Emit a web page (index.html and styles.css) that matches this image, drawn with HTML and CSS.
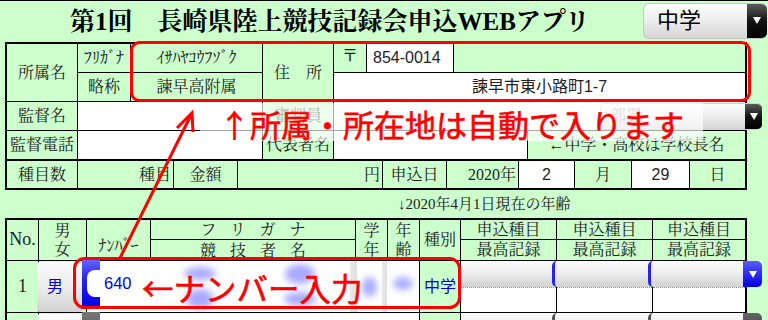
FILE: index.html
```html
<!DOCTYPE html>
<html lang="ja">
<head>
<meta charset="utf-8">
<title>第1回 長崎県陸上競技記録会申込WEBアプリ</title>
<link rel="stylesheet" href="styles.css">
</head>
<body>
<header class="head">
  <h1 class="title">第1回　長崎県陸上競技記録会申込WEBアプリ</h1>
  <div class="sel sel-top"><span class="sel-val">中学</span><span class="sel-btn"><i class="tri"></i></span></div>
</header>

<div class="ga">
  <div class="c a1">所属名</div>
  <div class="c a2">ﾌﾘｶﾞﾅ</div>
  <div class="c a3">ｲｻﾊﾔｺｳﾌｿﾞｸ</div>
  <div class="c a4">住　所</div>
  <div class="c a5 sans zipmark">〒</div>
  <div class="c w a6 sans left">854-0014</div>
  <div class="c a7"></div>
  <div class="c a8">略称</div>
  <div class="c a9">諫早高附属</div>
  <div class="c w a10 sans">諫早市東小路町1-7</div>
  <div class="c a11">監督名</div>
  <div class="c w a12"></div>
  <div class="c a13">審判員</div>
  <div class="c w a14"><div class="sel sel-dept"><span class="sel-val">部署</span><span class="sel-btn"><i class="tri"></i></span></div></div>
  <div class="c a15">監督電話</div>
  <div class="c w a16"></div>
  <div class="c a17">代表者名</div>
  <div class="c w a18"></div>
  <div class="c a19">←中学・高校は学校長名</div>
</div>

<div class="gb">
  <div class="c">種目数</div>
  <div class="c right">種目</div>
  <div class="c">金額</div>
  <div class="c right">円</div>
  <div class="c">申込日</div>
  <div class="c right">2020年</div>
  <div class="c w sans">2</div>
  <div class="c">月</div>
  <div class="c w sans">29</div>
  <div class="c">日</div>
</div>

<p class="caption">↓2020年4月1日現在の年齢</p>

<div class="gc">
  <div class="c k1 no">No.</div>
  <div class="c k2 stack"><span>男</span><span>女</span></div>
  <div class="c k3 nbh">ﾅﾝﾊﾞｰ</div>
  <div class="c k4 spaced">フリガナ</div>
  <div class="c k5 stack"><span>学</span><span>年</span></div>
  <div class="c k6 stack"><span>年</span><span>齢</span></div>
  <div class="c k7">種別</div>
  <div class="c k8">申込種目</div>
  <div class="c k9">申込種目</div>
  <div class="c k10">申込種目</div>
  <div class="c k11 spaced">競技者名</div>
  <div class="c k12">最高記録</div>
  <div class="c k13">最高記録</div>
  <div class="c k14">最高記録</div>

  <div class="c r3 no">1</div>
  <div class="c r3 sexcell"><div class="gsel sex sans">男</div></div>
  <div class="c w r3 sp4 entry">
    <div class="numbox"><span class="nb-bar"></span><span class="nb-field sans">640</span></div>
    <div class="namebox"><i class="blob b1"></i><i class="blob b3"></i><i class="blob b2"></i><i class="blob b4"></i></div>
    <span class="vbar"></span>
    <div class="gradebox"><i class="blob b5"></i></div>
    <span class="vbar thin"></span>
    <div class="agebox"><i class="blob b6"></i></div>
  </div>
  <div class="c r3 blue sans">中学</div>
  <div class="c w r3 ev"><div class="gsel evsel"></div><div class="evbot"></div></div>
  <div class="c w r3 ev"><div class="gsel evsel focus"></div><div class="evbot"></div></div>
  <div class="c w r3 ev"><div class="gsel evsel focus last"><span class="drop dblue"><i class="tri"></i></span></div><div class="evbot"></div></div>

  <div class="c r4"></div>
  <div class="c r4 sexcell"><div class="gsel sex"></div></div>
  <div class="c w r4 sp4 entry"><div class="numbox"><span class="nb-bar gray"></span></div></div>
  <div class="c r4"></div>
  <div class="c w r4 ev"><div class="gsel evsel"></div></div>
  <div class="c w r4 ev"><div class="gsel evsel focus gr"></div></div>
  <div class="c w r4 ev"><div class="gsel evsel focus gr last"><span class="drop ddark"><i class="tri"></i></span></div></div>
</div>

<div class="note1">↑所属・所在地は自動で入ります</div>
<div class="note2">←ナンバー入力</div>

<svg class="marks" width="768" height="320" viewBox="0 0 768 320">
  <rect x="131.5" y="42.5" width="618" height="58" rx="8" fill="none" stroke="#ff0000" stroke-width="3"/>
  <rect x="74.5" y="258.5" width="385" height="49" rx="10" fill="none" stroke="#ff0000" stroke-width="3"/>
  <line x1="120" y1="258" x2="191" y2="115" stroke="#ff0000" stroke-width="3"/>
  <polyline points="177,128 192,113 193,132" fill="none" stroke="#ff0000" stroke-width="3"/>
</svg>
</body>
</html>
```

FILE: styles.css
```css
* { box-sizing: border-box; margin: 0; padding: 0; }
html, body { width: 768px; height: 320px; overflow: hidden; }
body {
  position: relative;
  background: #ccffcc;
  color: #222;
  font-family: "Liberation Serif", "Noto Serif CJK JP", "Noto Sans CJK JP", serif;
  font-size: 16px;
  line-height: 1.2;
}
.sans { font-family: "Liberation Sans", "Noto Sans CJK JP", sans-serif; }

/* header */
.head { display: flex; align-items: flex-start; height: 42px; border-top: 1px solid #000; }
.title { padding-left: 70px; font-size: 25px; line-height: 41px; font-weight: bold; color: #000; white-space: nowrap; }
.sel { display: flex; overflow: hidden; background: linear-gradient(#fdfdfd, #ececec 50%, #d6d6d6); }
.sel-val { flex: 1; display: flex; align-items: center; white-space: nowrap; }
.sel-btn { width: 20px; display: flex; justify-content: center; align-items: center; background: linear-gradient(#5c5c5c, #141414 50%, #000); }
.tri { display: block; width: 0; height: 0; border-left: 4px solid transparent; border-right: 4px solid transparent; border-top: 7px solid #fff; }
.sel-top { margin-left: auto; margin-top: 2px; margin-right: 1px; width: 124px; height: 36px; border: 1px solid #c6c6c6; border-right: 0; border-radius: 6px; }
.sel-top .sel-val { padding-left: 13px; font-size: 22px; color: #000; font-family: "Liberation Sans", "Noto Sans CJK JP", sans-serif; }
.sel-top .sel-btn { align-items: flex-start; padding-top: 13px; }

/* generic cells */
.c { background: #ccffcc; display: flex; align-items: center; justify-content: center; white-space: nowrap; min-width: 0; }
.w { background: #fff; }
.left { justify-content: flex-start; padding-left: 6px; }
.right { justify-content: flex-end; padding-right: 2px; }

/* grid A */
.ga {
  display: grid;
  grid-template-columns: 70px 52px 131px 70px 32px 86px 73px 72px 144px;
  grid-template-rows: 28px 28px 28px 28px;
  gap: 1px; background: #000; border: 2px solid #000;
  width: 742px; margin-left: 5px;
}
.a1 { grid-area: 1 / 1 / 3 / 2; }
.a2 { grid-area: 1 / 2 / 2 / 3; }
.a3 { grid-area: 1 / 3 / 2 / 4; }
.a4 { grid-area: 1 / 4 / 3 / 5; }
.a5 { grid-area: 1 / 5 / 2 / 6; }
.a6 { grid-area: 1 / 6 / 2 / 7; }
.a7 { grid-area: 1 / 7 / 2 / 10; }
.a8 { grid-area: 2 / 2 / 3 / 3; }
.a9 { grid-area: 2 / 3 / 3 / 4; }
.a10 { grid-area: 2 / 5 / 3 / 10; }
.a11 { grid-area: 3 / 1 / 4 / 2; }
.a12 { grid-area: 3 / 2 / 4 / 4; }
.a13 { grid-area: 3 / 4 / 4 / 5; }
.a14 { grid-area: 3 / 5 / 4 / 10; justify-content: flex-end; }
.a15 { grid-area: 4 / 1 / 5 / 2; }
.a16 { grid-area: 4 / 2 / 5 / 4; }
.a17 { grid-area: 4 / 4 / 5 / 5; }
.a18 { grid-area: 4 / 5 / 5 / 8; }
.a19 { grid-area: 4 / 8 / 5 / 10; }
.zipmark { align-items: flex-start; padding-top: 2px; }
.sel-dept { width: 162px; height: 27px; margin-right: -17px; border: 1px solid #cfcfcf; border-right: 0; border-radius: 5px; }
.sel-dept .sel-val { padding-left: 9px; color: #9a9a9a; }
.sel-dept .sel-btn { width: 17px; }

/* grid B */
.gb {
  display: grid;
  grid-template-columns: 70px 95px 63px 144px 63px 71px 55px 56px 57px 55px;
  grid-template-rows: 27px;
  gap: 1px; background: #000; border: 2px solid #000; border-top: 0;
  width: 742px; margin-left: 5px;
}

.caption { height: 28px; line-height: 28px; padding-left: 398px; font-size: 15px; }

/* grid C */
.gc {
  display: grid;
  grid-template-columns: 31px 47px 63px 204px 31px 31px 40px 95px 95px 92px;
  grid-template-rows: 19px 20px 51px 30px;
  gap: 1px; background: #000; border: 2px solid #000; border-bottom: 0;
  width: 742px; margin-left: 5px;
}
.k1 { grid-area: 1 / 1 / 3 / 2; }
.k2 { grid-area: 1 / 2 / 3 / 3; }
.k3 { grid-area: 1 / 3 / 3 / 4; }
.k4 { grid-area: 1 / 4 / 2 / 5; }
.k5 { grid-area: 1 / 5 / 3 / 6; }
.k6 { grid-area: 1 / 6 / 3 / 7; }
.k7 { grid-area: 1 / 7 / 3 / 8; }
.k8 { grid-area: 1 / 8 / 2 / 9; }
.k9 { grid-area: 1 / 9 / 2 / 10; }
.k10 { grid-area: 1 / 10 / 2 / 11; }
.k11 { grid-area: 2 / 4 / 3 / 5; }
.k12 { grid-area: 2 / 8 / 3 / 9; }
.k13 { grid-area: 2 / 9 / 3 / 10; }
.k14 { grid-area: 2 / 10 / 3 / 11; }
.r3 { grid-row: 3; }
.r4 { grid-row: 4; }
.sp4 { grid-column: span 4; }
.stack { flex-direction: column; line-height: 19px; }
.no { font-size: 18px; }
.nbh { padding-top: 12px; }
.spaced { letter-spacing: 14px; padding-left: 14px; line-height: 19px; }
.blue { color: #0000ee; }

.gsel { background: linear-gradient(#fbfbfb, #ececec 50%, #d2d2d2); }
.sexcell { justify-content: flex-start; align-items: flex-start; }
.sex { flex: none; width: 45px; height: 50px; margin-left: -2px; margin-top: 1px; display: flex; align-items: center; padding-left: 10px; color: #0000ee; border-radius: 3px; }

.entry { justify-content: flex-start; align-items: stretch; }
.numbox { flex: none; width: 68px; margin-left: -5px; display: flex; align-items: flex-start; }
.nb-bar { flex: none; width: 18px; height: 48px; margin-top: -1px; background: linear-gradient(#6464ff, #2424f2 40%, #0000e2); }
.nb-bar.gray { background: linear-gradient(#777, #555); height: 30px; }
.nb-field { flex: 1; margin-left: -13px; margin-top: 9px; height: 27px; background: #fff; border-radius: 8px 0 0 8px; padding-left: 17px; display: flex; align-items: center; color: #0000ee; font-size: 16.5px; }
.namebox { flex: none; width: 200px; display: grid; grid-template-columns: 100px 100px; grid-template-rows: 25px 26px; place-items: center; }
.vbar { flex: none; width: 7px; background: linear-gradient(90deg, #e9e9e9, #dedede); }
.vbar.thin { width: 5px; }
.gradebox { flex: none; width: 25px; display: flex; align-items: center; justify-content: center; }
.agebox { flex: none; width: 32px; display: flex; align-items: center; justify-content: center; padding-bottom: 6px; }
.blob { display: block; border-radius: 50%; background: #7070ff; filter: blur(3.5px); opacity: .6; }
.b1 { width: 32px; height: 13px; }
.b2 { width: 28px; height: 20px; }
.b3 { width: 30px; height: 20px; }
.b4 { width: 32px; height: 14px; }
.b5 { width: 15px; height: 20px; }
.b6 { width: 20px; height: 13px; }

.ev { display: block; }
.evsel { height: 26px; }
.evbot { height: 25px; border-top: 1px dotted #888; }
.focus { margin-left: -5px; width: calc(100% + 5px); border-left: 3px solid #2323f3; border-radius: 5px 0 0 5px; }
.focus.gr { border-left-color: #555; }
.last { width: 114px; display: flex; justify-content: flex-end; }
.drop { width: 19px; height: 100%; display: flex; align-items: center; justify-content: center; border-radius: 0 5px 5px 0; }
.dblue { background: linear-gradient(#5a5aff, #0000dc); }
.ddark { background: linear-gradient(#666, #333); }

/* annotations */
.note1 {
  position: absolute; left: 200px; top: 103px; width: 503px; height: 38px;
  background: rgba(255, 255, 255, .65);
  padding-left: 19px; padding-top: 3px;
  color: #ff0000; font-family: "Noto Sans CJK JP", sans-serif; font-size: 31px; line-height: 36px; white-space: nowrap;
  -webkit-text-stroke: 0.6px #ff0000;
}
.note2 {
  position: absolute; left: 142px; top: 269px;
  color: #ff0000; font-family: "Noto Sans CJK JP", sans-serif; font-size: 31.5px; line-height: 36px; white-space: nowrap;
  -webkit-text-stroke: 0.6px #ff0000;
}
.marks { position: absolute; left: 0; top: 0; pointer-events: none; }
```
